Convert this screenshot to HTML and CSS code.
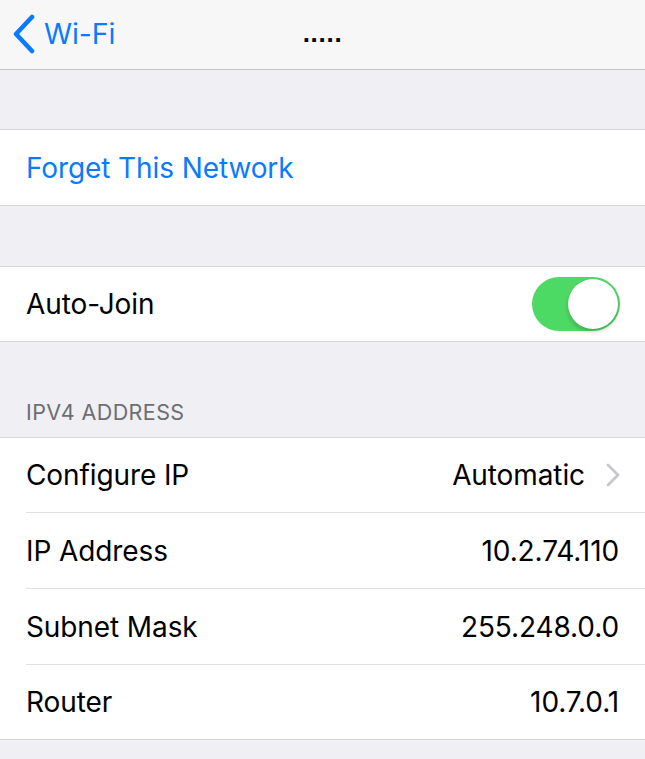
FILE: index.html
```html
<!DOCTYPE html>
<html>
<head>
<meta charset="utf-8">
<link rel="stylesheet" href="styles.css">
</head>
<body>
<div class="screen">
  <header class="nav">
    <div class="back">
      <svg class="back-chevron" width="24" height="40" viewBox="0 0 24 40"><path d="M20 3 L4 20 L20 37" fill="none" stroke="#0a7aff" stroke-width="4.6" stroke-linecap="round" stroke-linejoin="round"/></svg>
      <span class="back-label">Wi-Fi</span>
    </div>
    <div class="title">.....</div>
  </header>

  <div class="gap gap-top"></div>
  <section class="group">
    <div class="row"><span class="link">Forget This Network</span></div>
  </section>

  <div class="gap"></div>
  <section class="group">
    <div class="row row-short">
      <span class="label">Auto-Join</span>
      <span class="toggle"><span class="knob"></span></span>
    </div>
  </section>

  <div class="gap gap-header"><span class="section-title">IPV4 ADDRESS</span></div>
  <section class="group">
    <div class="row row-short">
      <span class="label">Configure IP</span>
      <span class="value with-chevron">Automatic
        <svg class="chevron" width="14" height="24" viewBox="0 0 14 24"><path d="M2 2 L12 12 L2 22" fill="none" stroke="#c7c7cc" stroke-width="2.8" stroke-linecap="round" stroke-linejoin="round"/></svg>
      </span>
    </div>
    <div class="row"><span class="label">IP Address</span><span class="value">10.2.74.110</span></div>
    <div class="row"><span class="label">Subnet Mask</span><span class="value">255.248.0.0</span></div>
    <div class="row row-last"><span class="label">Router</span><span class="value">10.7.0.1</span></div>
  </section>
  <div class="gap"></div>
</div>
</body>
</html>
```
FILE: styles.css
```css
html, body {
  margin: 0;
  padding: 0;
  background: #efeff4;
}
body {
  font-family: Inter, "Liberation Sans", Arial, sans-serif;
  -webkit-font-smoothing: antialiased;
}
.screen {
  width: 645px;
  height: 759px;
  overflow: hidden;
  display: flex;
  flex-direction: column;
}
.nav {
  height: 69px;
  flex: none;
  background: #f7f7f8;
  border-bottom: 1px solid #c4c4c8;
  display: grid;
  grid-template-columns: 1fr auto 1fr;
  align-items: center;
}
.back {
  display: flex;
  align-items: center;
  padding-left: 12px;
  gap: 8px;
  color: #0a7aff;
  height: 100%;
}
.back-chevron { display: block; margin-top: -1px; }
.back-label {
  font-size: 28.5px;
  letter-spacing: -0.1px;
  margin-top: -3px;
}
.title {
  font-family: "Liberation Sans", Arial, sans-serif;
  font-weight: bold;
  font-size: 26px;
  letter-spacing: 0.7px;
  color: #000;
  margin-top: -2px;
}
.gap {
  flex: none;
  height: 60px;
  background: #efeff4;
}
.gap-top { height: 59px; }
.gap-header {
  height: 95px;
  display: flex;
  align-items: flex-end;
  box-sizing: border-box;
  padding: 0 0 12px 26px;
}
.section-title {
  font-size: 21.5px;
  color: #6d6d72;
  letter-spacing: 0.4px;
}
.group {
  flex: none;
  background: #fff;
  border-top: 1px solid #d6d6da;
  border-bottom: 1px solid #d6d6da;
}
.row {
  height: 75px;
  box-sizing: border-box;
  margin-left: 26px;
  padding-right: 26px;
  display: flex;
  align-items: center;
  justify-content: space-between;
  font-size: 28px;
  color: #000;
}
.row + .row {
  border-top: 1px solid #e0e0e3;
  height: 76px;
}
.row.row-short { height: 74px; }
.row.row-last { height: 75px; }
.link { color: #0a7aff; }
.label, .value, .link { letter-spacing: -0.1px; }
.value { display: flex; align-items: center; }
.with-chevron { margin-right: -1px; }
.chevron { display: block; margin-left: 21px; }
.toggle {
  position: relative;
  width: 88px;
  height: 54px;
  border-radius: 27px;
  background: #4cd964;
  margin-right: -1px;
}
.knob {
  position: absolute;
  right: 2px;
  top: 2px;
  width: 50px;
  height: 50px;
  border-radius: 50%;
  background: #fff;
  box-shadow: 0 3px 4px rgba(0,0,0,0.18), 0 0 1px rgba(0,0,0,0.15);
}
```
